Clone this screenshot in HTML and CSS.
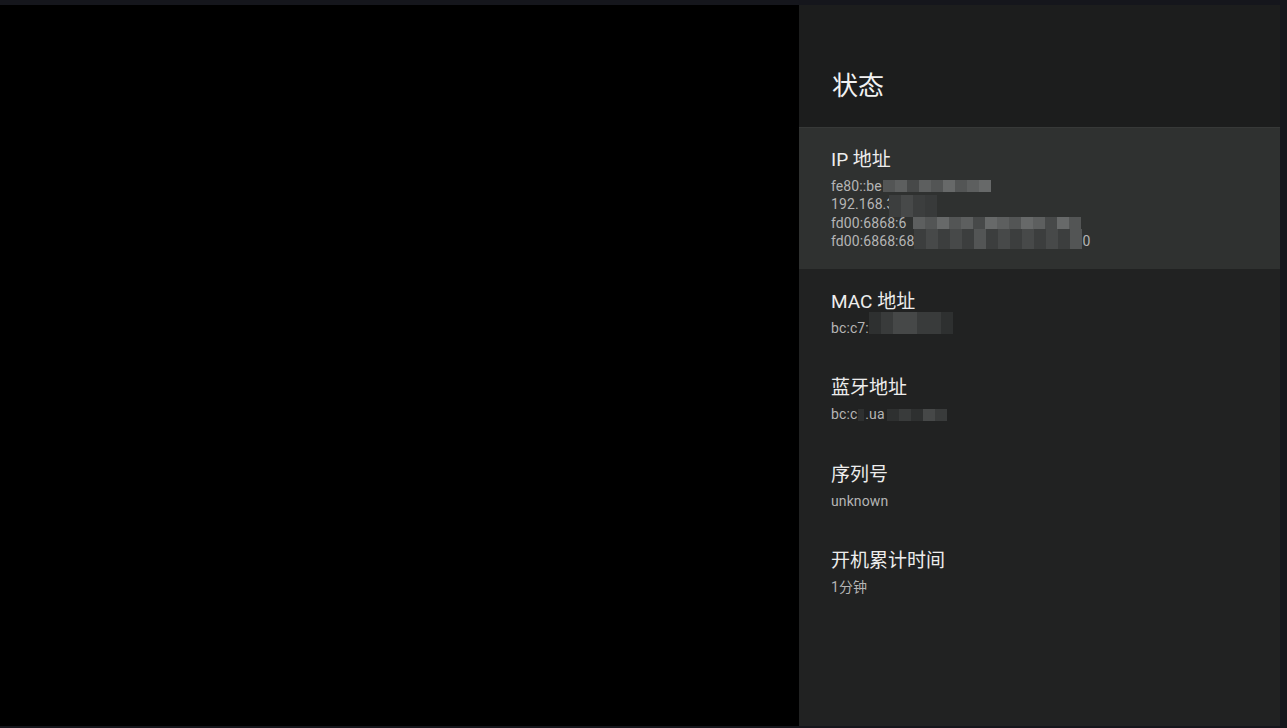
FILE: index.html
```html
<!DOCTYPE html>
<html lang="zh-CN">
<head>
<meta charset="utf-8">
<title>状态</title>
<link rel="stylesheet" href="styles.css">
</head>
<body>
<div class="frame">
  <div class="video"></div>
  <aside class="panel">
    <header class="panel-header"><h1 class="panel-title">状态</h1></header>
    <ul class="list">
      <li class="item selected">
        <div class="item-title">IP 地址</div>
        <div class="item-values">
          <div class="val"><span>fe80::be</span><span class="mosaic r1"><i class="c3"></i><i class="c4"></i><i class="c2"></i><i class="c4"></i><i class="c3"></i><i class="c5"></i><i class="c3"></i><i class="c4"></i><i class="c5"></i></span></div>
          <div class="val"><span>192.168.3</span><span class="mosaic r2"><i class="c1"></i><i class="c2"></i><i class="c1"></i><i class="c0"></i></span></div>
          <div class="val"><span>fd00:6868:6</span><span class="mosaic r3"><i class="c4"></i><i class="c3"></i><i class="c5"></i><i class="c3"></i><i class="c4"></i><i class="c2"></i><i class="c5"></i><i class="c4"></i><i class="c3"></i><i class="c5"></i><i class="c4"></i><i class="c2"></i><i class="c5"></i><i class="c3"></i></span></div>
          <div class="val"><span>fd00:6868:68</span><span class="mosaic r4"><i class="c1"></i><i class="c2"></i><i class="c1"></i><i class="c2"></i><i class="c1"></i><i class="c3"></i><i class="c1"></i><i class="c2"></i><i class="c1"></i><i class="c2"></i><i class="c1"></i><i class="c2"></i><i class="c1"></i><i class="c3"></i></span><span>0</span></div>
        </div>
      </li>
      <li class="item">
        <div class="item-title">MAC 地址</div>
        <div class="item-values">
          <div class="val"><span>bc:c7:</span><span class="mosaic m1"><i class="d1"></i><i class="d2"></i><i class="d3"></i><i class="d3"></i><i class="d2"></i><i class="d2"></i><i class="d1"></i></span></div>
        </div>
      </li>
      <li class="item">
        <div class="item-title">蓝牙地址</div>
        <div class="item-values">
          <div class="val"><span>bc:c</span><span class="mosaic b0"><i class="d1"></i></span><span>.ua</span><span class="mosaic b1"><i class="d1"></i><i class="d2"></i><i class="d1"></i><i class="d3"></i><i class="d2"></i></span></div>
        </div>
      </li>
      <li class="item">
        <div class="item-title">序列号</div>
        <div class="item-values"><div class="val"><span>unknown</span></div></div>
      </li>
      <li class="item">
        <div class="item-title">开机累计时间</div>
        <div class="item-values"><div class="val"><span>1分钟</span></div></div>
      </li>
    </ul>
  </aside>
</div>
</body>
</html>
```
FILE: styles.css
```css
* { box-sizing: border-box; }
html, body { margin: 0; padding: 0; }
body {
  background: #15161c;
  width: 1287px;
  height: 728px;
  overflow: hidden;
  font-family: Roboto, "Noto Sans CJK SC", sans-serif;
}
.frame {
  display: flex;
  padding: 5px 7px 2px 0;
  height: 728px;
}
.video {
  width: 799px;
  background: #000;
}
.panel {
  width: 481px;
  background: #212222;
  display: flex;
  flex-direction: column;
}
.panel-header {
  height: 122px;
  background: #1c1d1d;
  padding: 64px 0 0 33px;
}
.panel-title {
  margin: 0;
  font-size: 26px;
  line-height: 34px;
  font-weight: 400;
  color: #f2f2f2;
}
.list {
  list-style: none;
  margin: 0;
  padding: 0;
}
.item {
  padding: 22px 0 18px 32px;
}
.item.selected {
  background: #2f3130;
  border-top: 1px solid #373938;
  padding-top: 21px;
  padding-bottom: 19px;
}
.item-title {
  font-size: 19px;
  line-height: 22px;
  color: #ededed;
}
.item-values {
  margin-top: 6px;
}
.val {
  display: flex;
  align-items: center;
  font-size: 14px;
  line-height: 18.3px;
  height: 18.3px;
  color: #b5b5b5;
  white-space: nowrap;
  letter-spacing: 0.1px;
}
.mosaic {
  display: inline-flex;
  height: 12px;
}
.mosaic i {
  display: block;
  width: 12px;
  height: 100%;
}
.r1 { margin-left: 1px; }
.r2 { height: 22px; margin-left: -5px; margin-top: 4px; }
.r3 { margin-left: 6px; }
.r4 { height: 20px; margin-left: -1px; margin-top: -4px; margin-right: 1px; }
.m1 { height: 22px; margin-left: 0; margin-top: -10px; }
.b0 { height: 12px; margin: 0 1px; }
.b0 i { width: 6px; }
.b1 { margin-left: 2px; }
.c0 { background: #383a3a; }
.c1 { background: #3c3e3e; }
.c2 { background: #474949; }
.c3 { background: #535555; }
.c4 { background: #5d5f5f; }
.c5 { background: #676969; }
.d1 { background: #2e3030; }
.d2 { background: #393b3b; }
.d3 { background: #464848; }
```
